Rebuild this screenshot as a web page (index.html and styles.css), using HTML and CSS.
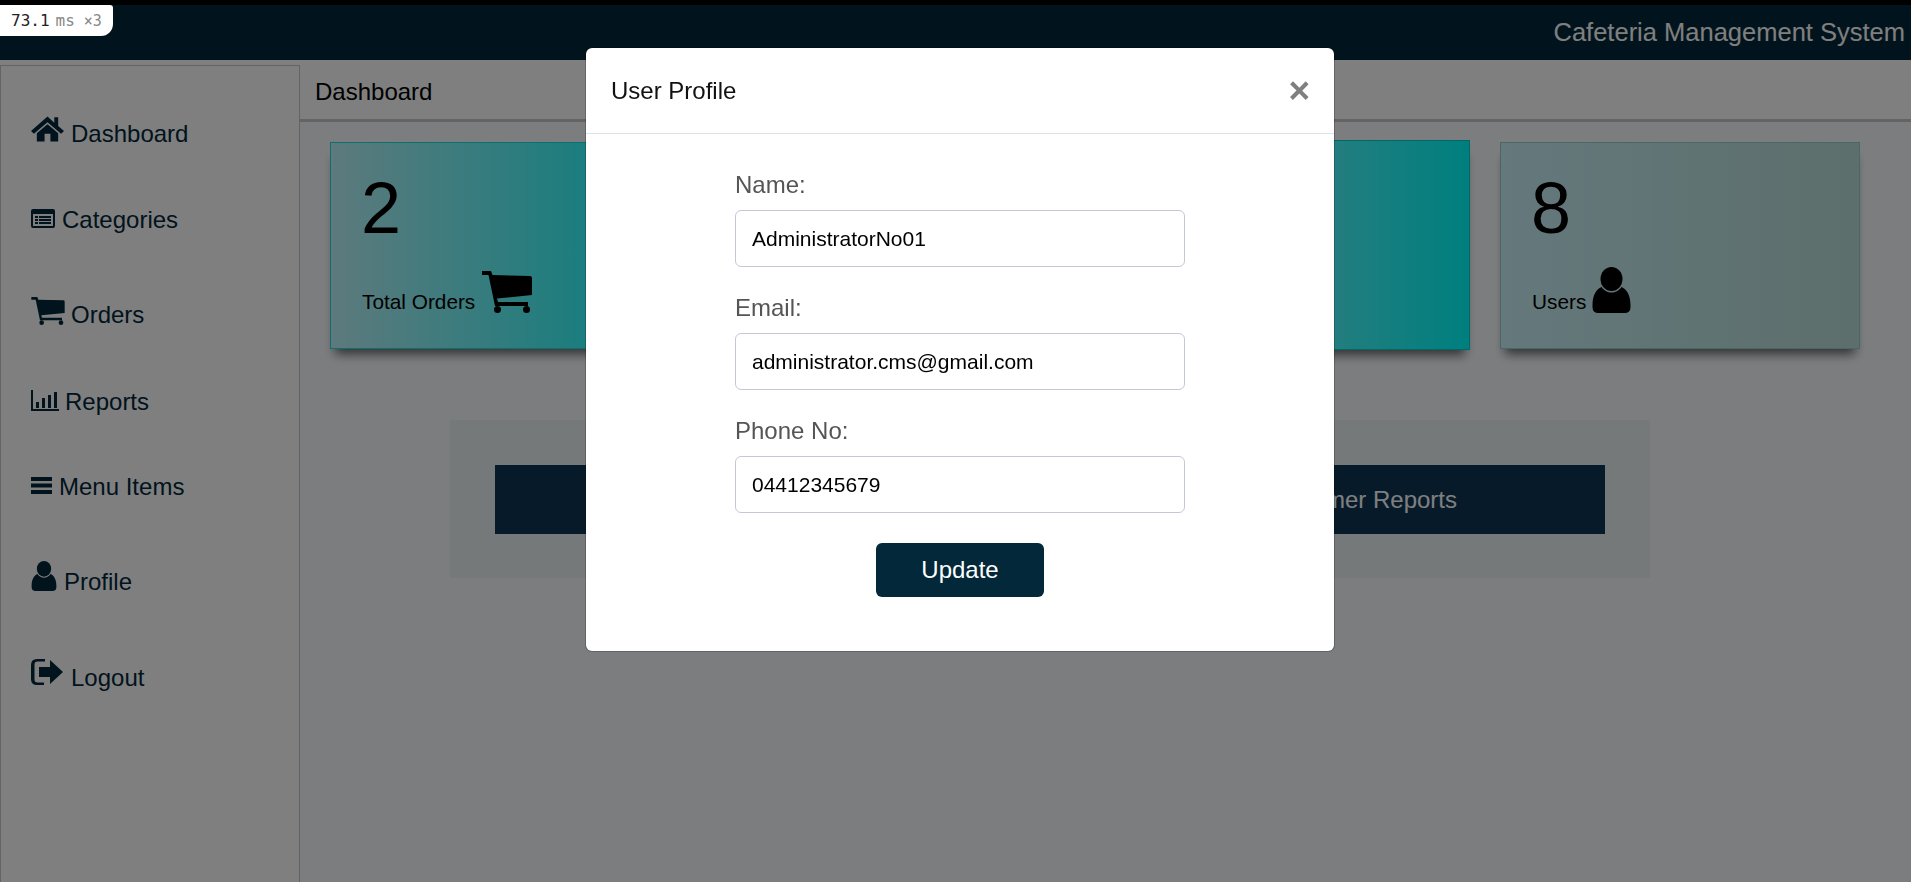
FILE: index.html
```html
<!DOCTYPE html>
<html lang="en">
  <head>
    <meta charset="UTF-8" />
    <meta name="viewport" content="width=device-width, initial-scale=1.0" />
    <title>Cafeteria Management System</title>
    <link rel="stylesheet" href="styles.css">
  </head>
  <body>
    <header class="navbar">
      <span class="brand">Cafeteria Management System</span>
    </header>

    <div class="layout">
      <nav class="sidebar">
        <a class="nav-item item-dashboard" href="#">
          <svg class="nav-icon icon-home" viewBox="0 0 34 26"><path d="M17 0L0 15l3 3L17 6l14 12 3-3-6-5V1h-4v5.500z"/><path d="M6 17.500L17 8l11 9.500V26h-8v-8h-6v8H6z"/></svg>
          <span>Dashboard</span>
        </a>
        <a class="nav-item item-categories" href="#">
          <svg class="nav-icon icon-list" viewBox="0 0 24 19"><path fill-rule="evenodd" d="M2 0h20a2 2 0 0 1 2 2v15a2 2 0 0 1-2 2H2a2 2 0 0 1-2-2V2a2 2 0 0 1 2-2zm0 5v11.500a.5.500 0 0 0 .5.500h19a.5.500 0 0 0 .5-.5V5z"/><path d="M4 7h3v2H4zM8 7h12v2H8zM4 10h3v2H4zM8 10h12v2H8zM4 13h3v2H4zM8 13h12v2H8z"/></svg>
          <span>Categories</span>
        </a>
        <a class="nav-item item-orders" href="#">
          <svg class="nav-icon icon-cart" viewBox="0 0 50 42"><path d="M0 0h9l1.500 4L48 5q2 0 2 2v17l-35 3.500 1 3.500h30v4H13L6.500 4H0z"/><circle cx="15.500" cy="38.500" r="3.500"/><circle cx="44.500" cy="38.500" r="3.500"/></svg>
          <span>Orders</span>
        </a>
        <a class="nav-item item-reports" href="#">
          <svg class="nav-icon icon-chart" viewBox="0 0 28 21"><path d="M0 0h2v19H28v2H0z"/><path d="M5 12h3v6H5zM11 8h3v10h-3zM17 5h3v13h-3zM23 2h3v16h-3z"/></svg>
          <span>Reports</span>
        </a>
        <a class="nav-item item-menu" href="#">
          <svg class="nav-icon icon-menu" viewBox="0 0 21 17"><path d="M0 0h21v4H0zM0 6.500h21v4H0zM0 13h21v4H0z"/></svg>
          <span>Menu Items</span>
        </a>
        <a class="nav-item item-profile" href="#">
          <svg class="nav-icon icon-user" viewBox="0 0 38 46"><ellipse cx="19" cy="12" rx="11" ry="12"/><path d="M0 38c0-10 4-16 9-18 3 4 6 5.500 10 5.500s7-1.500 10-5.500c5 2 9 8 9 18v2q0 6-6 6H6q-6 0-6-6z"/></svg>
          <span>Profile</span>
        </a>
        <a class="nav-item item-logout" href="#">
          <svg class="nav-icon icon-logout" viewBox="0 0 32 26"><path d="M6 0h8v2.500H6.500q-3 0-3 3v15q0 3 3 3H13V26H6q-6 0-6-6V6q0-6 6-6z"/><path d="M19 1l13 12-13 12v-7H8V8h11z"/></svg>
          <span>Logout</span>
        </a>
      </nav>

      <main class="content">
        <div class="page-title">Dashboard</div>

        <div class="cards">
          <div class="card card-teal">
            <div class="count">2</div>
            <div class="card-foot">
              <span>Total Orders</span>
              <svg class="card-cart" viewBox="0 0 50 42"><path d="M0 0h9l1.500 4L48 5q2 0 2 2v17l-35 3.500 1 3.500h30v4H13L6.500 4H0z"/><circle cx="15.500" cy="38.500" r="3.500"/><circle cx="44.500" cy="38.500" r="3.500"/></svg>
            </div>
          </div>
          <div class="card card-teal"></div>
          <div class="card card-teal card-active"></div>
          <div class="card card-gray">
            <div class="count">8</div>
            <div class="card-foot foot-users">
              <span>Users</span>
              <svg class="card-user" viewBox="0 0 38 46"><ellipse cx="19" cy="12" rx="11" ry="12"/><path d="M0 38c0-10 4-16 9-18 3 4 6 5.500 10 5.500s7-1.500 10-5.500c5 2 9 8 9 18v2q0 6-6 6H6q-6 0-6-6z"/></svg>
            </div>
          </div>
        </div>

        <div class="report-panel">
          <div class="report-bar">
            <a href="#">Customer Reports</a>
          </div>
        </div>
      </main>
    </div>

    <div class="backdrop">
      <div class="modal">
        <div class="modal-header">
          <h4>User Profile</h4>
          <span class="close">&times;</span>
        </div>
        <form class="modal-body">
          <label for="name">Name:</label>
          <input type="text" id="name" value="AdministratorNo01" />
          <label for="email">Email:</label>
          <input type="text" id="email" value="administrator.cms@gmail.com" />
          <label for="phone">Phone No:</label>
          <input type="text" id="phone" value="04412345679" />
          <button type="button" class="btn-update">Update</button>
        </form>
      </div>
    </div>

    <div class="timer"><b>73.1</b><i>ms</i><em>&times;3</em></div>
  </body>
</html>
```

FILE: styles.css
```css
* {
  box-sizing: border-box;
}
html, body {
  height: 100%;
}
body {
  margin: 0;
  overflow: hidden;
  background: #fff;
  font-family: "Liberation Sans", Arial, sans-serif;
  color: #03283a;
}
a {
  color: inherit;
  text-decoration: none;
}

.navbar {
  height: 60px;
  border-top: 5px solid #000;
  background: #03283a;
  display: flex;
  justify-content: flex-end;
  align-items: center;
  padding-right: 6px;
}
.brand {
  font-size: 25.5px;
  color: #fff;
}

.layout {
  display: flex;
  height: 822px;
  padding-top: 5px;
}
.sidebar {
  width: 300px;
  flex: none;
  border: 1px solid #c8c8c8;
  border-bottom: none;
  padding: 50px 0 0 30px;
}
.nav-item {
  display: flex;
  align-items: flex-start;
  font-size: 24px;
  line-height: 36px;
}
.nav-icon {
  fill: currentColor;
  flex: none;
}
.item-dashboard { height: 86px; }
.item-categories { height: 95px; }
.item-orders { height: 87px; }
.item-reports { height: 85px; }
.item-menu { height: 95px; }
.item-profile { height: 96px; }

.icon-home { width: 33px; height: 26px; margin: 0 7px 0 0; }
.icon-list { width: 24px; height: 19px; margin: 7px 7px 0 0; }
.icon-cart { width: 34px; height: 28px; margin: 0 6px 0 0; }
.icon-chart { width: 28px; height: 21px; margin: 6px 6px 0 0; }
.icon-menu { width: 21px; height: 17px; margin: 8px 7px 0 0; }
.icon-user { width: 26px; height: 30px; margin: -3px 7px 0 0; }
.icon-logout { width: 32px; height: 26px; margin: -1px 8px 0 0; }

.content {
  flex: 1;
  background: #f9fbfe;
}
.page-title {
  height: 57px;
  background: #fff;
  border-bottom: 3px solid #c8c8c8;
  padding-left: 15px;
  font-size: 24px;
  line-height: 54px;
  color: #000;
}

.cards {
  display: grid;
  grid-template-columns: repeat(4, 360px);
  gap: 30px;
  align-items: center;
  margin: 18px 0 0 30px;
}
.card {
  height: 207px;
  padding: 25px 31px 0;
  color: #000;
  box-shadow: 0 10px 10px -5px rgba(0, 0, 0, 0.6);
}
.card-teal {
  background: linear-gradient(to right, #bbf4fa, #00ffff);
  border: 1px solid #18e0e0;
}
.card-active {
  height: 210px;
  border-color: #00d0d0;
}
.card-gray {
  background: linear-gradient(to right, #caf2fa, #b8ded8);
  border: 1px solid #98cccf;
}
.count {
  font-size: 72px;
  line-height: 80px;
  margin-left: -1px;
}
.card-foot {
  display: flex;
  align-items: flex-end;
  gap: 7px;
  height: 60px;
  margin-top: 5px;
  font-size: 20.8px;
  line-height: 24px;
}
.card-foot span {
  margin-bottom: -1px;
}
.foot-users {
  gap: 6px;
}
.card-cart {
  width: 50px;
  height: 42px;
  flex: none;
}
.card-user {
  width: 39px;
  height: 46px;
  flex: none;
}

.report-panel {
  width: 1200px;
  margin: 70px 0 0 150px;
  padding: 45px 45px 44px;
  background: #eaf2f2;
}
.report-bar {
  height: 69px;
  background: #0e3555;
  display: flex;
  justify-content: flex-end;
  align-items: center;
  padding-right: 148px;
  font-size: 24px;
  color: #fff;
}

/* modal sits over everything */
.backdrop {
  position: fixed;
  inset: 0;
  background: rgba(0, 0, 0, 0.5);
  display: flex;
  justify-content: center;
  align-items: flex-start;
  padding: 47px 0 0 9px;
}
.modal {
  width: 750px;
  height: 605px;
  background: #fff;
  border: 1px solid rgba(0, 0, 0, 0.2);
  border-radius: 7px;
  background-clip: padding-box;
}
.modal-header {
  height: 86px;
  border-bottom: 1px solid #dee2e6;
  padding: 1px 24px 0 25px;
  display: flex;
  justify-content: space-between;
  align-items: center;
}
.modal-header h4 {
  margin: 0;
  font-size: 24px;
  font-weight: 400;
  color: #111;
}
.close {
  font-size: 37px;
  font-weight: 700;
  line-height: 36px;
  color: #7f7f7f;
}
.modal-body {
  width: 450px;
  margin: 33px auto 0;
  display: flex;
  flex-direction: column;
}
label {
  font-size: 24px;
  line-height: 36px;
  color: #555;
  margin-bottom: 7px;
}
input {
  height: 57px;
  width: 100%;
  margin-bottom: 23px;
  padding: 0 16px;
  border: 1px solid #c5c8d8;
  border-radius: 6px;
  font-family: "Liberation Sans", Arial, sans-serif;
  font-size: 21px;
  color: #000;
}
.btn-update {
  width: 168px;
  height: 54px;
  margin: 7px auto 0;
  border: none;
  border-radius: 6px;
  background: #03283a;
  color: #fff;
  font-family: "Liberation Sans", Arial, sans-serif;
  font-size: 24px;
}

.timer {
  position: fixed;
  top: 5px;
  left: 0;
  width: 113px;
  height: 31px;
  padding-left: 11px;
  background: #fff;
  border-radius: 0 3px 12px 0;
  display: flex;
  align-items: center;
  font-family: "DejaVu Sans Mono", monospace;
  color: #888;
}
.timer b {
  font-size: 16px;
  font-weight: 400;
  color: #222;
}
.timer i {
  font-size: 16px;
  font-style: normal;
  margin-left: 6px;
}
.timer em {
  font-size: 15px;
  font-style: normal;
  margin-left: 9px;
}
```
